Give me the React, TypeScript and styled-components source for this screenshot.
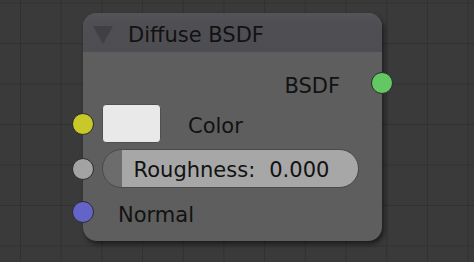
import React from "react";
import styled, { createGlobalStyle } from "styled-components";

const GlobalStyle = createGlobalStyle`
    html, body {
        margin: 0;
        padding: 0;
        background: #393939;
    }
    body {
        font-family: "DejaVu Sans", "Liberation Sans", sans-serif;
    }
`;

const Canvas = styled.div`
    width: 474px;
    height: 262px;
    box-sizing: border-box;
    padding: 13px 0 0 83px;
    background-color: #3a3a3a;
    background-image:
        linear-gradient(to right, #313131 1px, transparent 1px),
        linear-gradient(to bottom, #313131 1px, transparent 1px);
    background-size: 40.7px 40.5px;
    background-position: 20px 2.5px;
    overflow: hidden;
`;

const Node = styled.div`
    width: 299px;
    height: 228px;
    border-radius: 14px;
    background: #5e5e5e;
    box-shadow: 2px 3px 5px rgba(0, 0, 0, 0.55);
    display: flex;
    flex-direction: column;
`;

const Header = styled.div`
    height: 39px;
    flex: none;
    box-sizing: border-box;
    padding-top: 5px;
    border-radius: 14px 14px 0 0;
    background: linear-gradient(to bottom, #545358 0%, #4f4e53 30%, #4e4d52 100%);
    display: flex;
    align-items: center;
    padding-left: 10px;
    gap: 15px;
    color: #121212;
    font-size: 21px;
`;

const Triangle = styled.div`
    width: 0;
    height: 0;
    border-left: 10px solid transparent;
    border-right: 10px solid transparent;
    border-top: 18px solid #403f44;
`;

const Body = styled.div`
    display: flex;
    flex-direction: column;
    padding-top: 18px;
`;

const Row = styled.div<{ $h: number; $mt?: number; $align?: string; $pl?: number; $pr?: number }>`
    position: relative;
    box-sizing: border-box;
    height: ${p => p.$h}px;
    margin-top: ${p => p.$mt || 0}px;
    display: flex;
    align-items: center;
    justify-content: ${p => p.$align || "flex-start"};
    padding-left: ${p => p.$pl || 0}px;
    padding-right: ${p => p.$pr || 0}px;
    color: #121212;
    font-size: 21px;
`;

const Label = styled.span<{ $shift?: number }>`
    padding-top: ${p => (p.$shift || 0) * 2}px;
`;

const Socket = styled.span<{ $color: string; $side: "left" | "right"; $dy?: number }>`
    position: absolute;
    top: 50%;
    ${p => p.$side}: -11px;
    width: 20px;
    height: 20px;
    margin-top: ${p => -11 + (p.$dy || 0)}px;
    border-radius: 50%;
    background: ${p => p.$color};
    border: 1px solid #2c2c2c;
`;

const Swatch = styled.div`
    width: 59px;
    height: 39px;
    box-sizing: border-box;
    border-radius: 4px;
    background: #e9e9e9;
    border: 1px solid #505050;
    margin-right: 27px;
`;

const Slider = styled.div`
    width: 257px;
    height: 39px;
    box-sizing: border-box;
    border-radius: 20px;
    border: 1px solid #4a4a4a;
    background: linear-gradient(to right, #6c6c6c 0, #6c6c6c 19px, #a7a7a7 19px);
    display: flex;
    align-items: center;
    justify-content: center;
    gap: 14px;
    padding-left: 2px;
    color: #121212;
    font-size: 21px;
`;

export default function App() {
    return (
        <>
            <GlobalStyle />
            <Canvas>
                <Node>
                    <Header>
                        <Triangle />
                        <span>Diffuse BSDF</span>
                    </Header>
                    <Body>
                        <Row $h={30} $align="flex-end" $pr={42}>
                            <Label $shift={1}>BSDF</Label>
                            <Socket $color="#63c863" $side="right" $dy={-2} />
                        </Row>
                        <Row $h={39} $mt={4} $pl={19}>
                            <Socket $color="#c8c829" $side="left" />
                            <Swatch />
                            <Label $shift={2}>Color</Label>
                        </Row>
                        <Row $h={39} $mt={6} $pl={19}>
                            <Socket $color="#a3a3a3" $side="left" />
                            <Slider>
                                <Label $shift={1}>Roughness:</Label>
                                <Label $shift={1}>0.000</Label>
                            </Slider>
                        </Row>
                        <Row $h={30} $mt={10} $pl={35}>
                            <Socket $color="#6464c8" $side="left" $dy={-1} />
                            <Label $shift={2}>Normal</Label>
                        </Row>
                    </Body>
                </Node>
            </Canvas>
        </>
    );
}
